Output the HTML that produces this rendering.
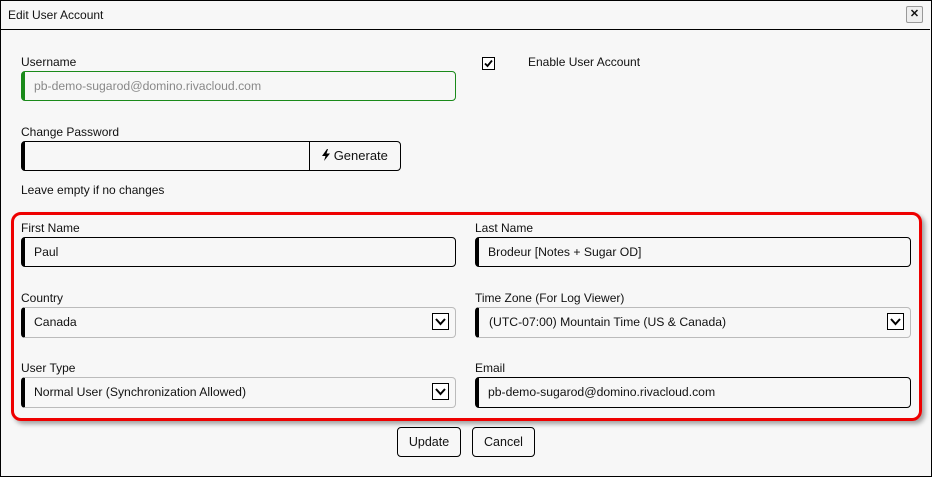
<!DOCTYPE html>
<html><head><style>
body{margin:0;width:932px;height:477px;background:#f7f7f7;font-family:"Liberation Sans",Arial,sans-serif;font-size:12px;color:#111;position:relative;overflow:hidden}
.frame{position:absolute;left:0;top:0;width:930px;height:475px;border:1px solid #000}
.title{position:absolute;left:0;top:0;width:930px;height:29px;border-bottom:1px solid #000}
.title span{position:absolute;left:8px;top:8px;font-size:12px}
.x{position:absolute;left:906px;top:6px;width:15px;height:15px;border:1px solid #999;border-radius:2px;background:#eee;font-size:11px;text-align:center;line-height:15px;font-weight:bold}
.ab{position:absolute}
.lbl{position:absolute;font-size:12px}
.in{position:absolute;box-sizing:border-box;border:1px solid #000;border-left:4px solid #000;border-radius:4px;background:#f7f7f7;font-family:"Liberation Sans",Arial,sans-serif;font-size:12.2px;padding-left:9px;line-height:28px}
.sel{border-color:#bbb;border-left-color:#000}
.dd{position:absolute;right:6px;top:5px;width:17px;height:17px;box-sizing:border-box;border:1px solid #000;background:#fff}
.dd svg{position:absolute;left:2px;top:3px}
.red{position:absolute;left:11px;top:212px;width:905px;height:203px;border:3px solid #e00;border-radius:10px;box-shadow:3px 3px 5px rgba(0,0,0,.35)}
.btn{position:absolute;box-sizing:border-box;border:1px solid #000;border-radius:4px;background:#f7f7f7;text-align:center;font-family:"Liberation Sans",Arial,sans-serif;font-size:12.5px;line-height:28px}
</style></head><body>
<div class="frame"></div>
<div class="title"><span>Edit User Account</span></div>
<div class="x">✕</div>

<div class="lbl" style="left:21px;top:55px">Username</div>
<div class="in" style="left:21px;top:71px;width:435px;height:30px;border-color:#1a8a1a;color:#888">pb-demo-sugarod@domino.rivacloud.com</div>
<div class="ab" style="left:482px;top:57px;width:11px;height:11px;border:1px solid #000;background:#fff"><svg width="11" height="11" viewBox="0 0 11 11"><path d="M2 5.5L4.5 8L9 2.5" stroke="#000" stroke-width="1.8" fill="none"/></svg></div>
<div class="lbl" style="left:528px;top:55px">Enable User Account</div>

<div class="lbl" style="left:21px;top:125px">Change Password</div>
<div class="in" style="left:21px;top:141px;width:289px;height:30px;border-radius:4px 0 0 4px"></div>
<div class="btn" style="left:309px;top:141px;width:92px;height:30px;border-radius:0 4px 4px 0;font-size:13px"><svg width="8" height="12" viewBox="0 0 8 12" style="vertical-align:-1px"><path d="M5 0L0 7H3.5L2 12L8 4.5H4.5L6 0Z" fill="#000"/></svg> Generate</div>
<div class="lbl" style="left:21px;top:183px">Leave empty if no changes</div>

<div class="red"></div>
<div class="lbl" style="left:21px;top:221px">First Name</div>
<div class="in" style="left:21px;top:237px;width:435px;height:30px">Paul</div>
<div class="lbl" style="left:475px;top:221px">Last Name</div>
<div class="in" style="left:475px;top:237px;width:436px;height:30px">Brodeur [Notes + Sugar OD]</div>

<div class="lbl" style="left:21px;top:291px">Country</div>
<div class="in sel" style="left:21px;top:307px;width:435px;height:31px">Canada<div class="dd"><svg width="11" height="9"><path d="M1 2L5.5 7L10 2" stroke="#000" stroke-width="2" fill="none"/></svg></div></div>
<div class="lbl" style="left:475px;top:291px">Time Zone (For Log Viewer)</div>
<div class="in sel" style="left:475px;top:307px;width:436px;height:31px;padding-left:10px">(UTC-07:00) Mountain Time (US &amp; Canada)<div class="dd"><svg width="11" height="9"><path d="M1 2L5.5 7L10 2" stroke="#000" stroke-width="2" fill="none"/></svg></div></div>

<div class="lbl" style="left:21px;top:361px">User Type</div>
<div class="in sel" style="left:21px;top:377px;width:435px;height:31px">Normal User (Synchronization Allowed)<div class="dd"><svg width="11" height="9"><path d="M1 2L5.5 7L10 2" stroke="#000" stroke-width="2" fill="none"/></svg></div></div>
<div class="lbl" style="left:475px;top:361px">Email</div>
<div class="in" style="left:475px;top:377px;width:436px;height:31px">pb-demo-sugarod@domino.rivacloud.com</div>

<div class="btn" style="left:397px;top:427px;width:64px;height:30px">Update</div>
<div class="btn" style="left:472px;top:427px;width:63px;height:30px">Cancel</div>
</body></html>
